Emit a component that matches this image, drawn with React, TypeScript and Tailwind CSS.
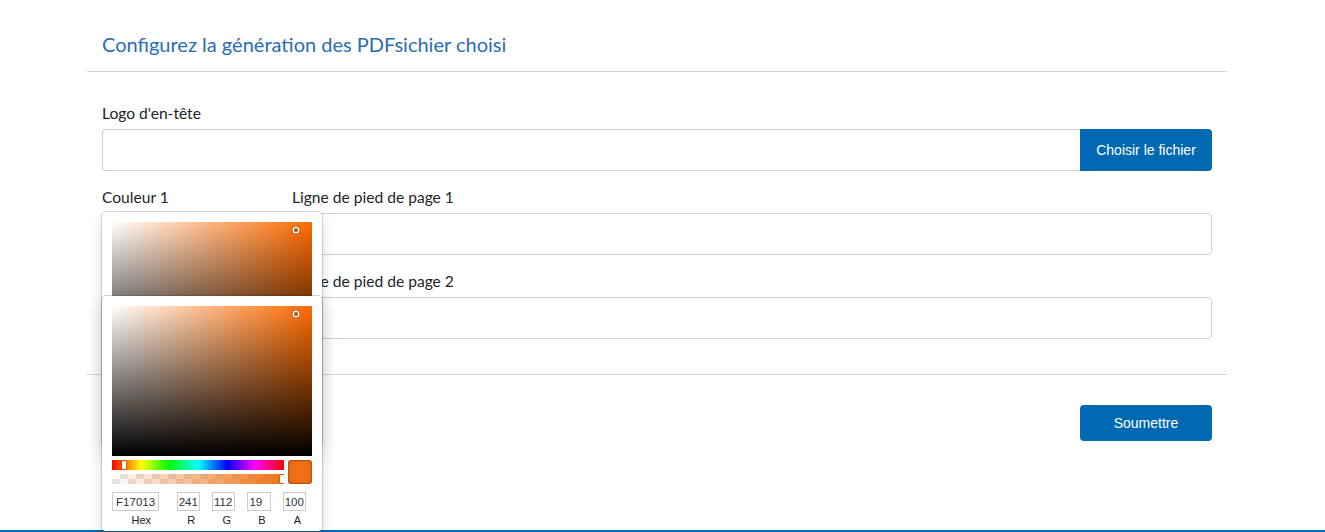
import React from "react";

// Sketch style colour picker, shown open over the colour field
function ColorField({ label, value, wide }: { label: string; value: string; wide?: boolean }) {
  return (
    <div className={wide ? "flex-[2]" : "flex-1 pl-[6px]"}>
      <input
        readOnly
        value={value}
        className="block w-[80%] px-[7%] pt-[4px] pb-[3px] text-[11.5px] leading-[12px] text-[#333] shadow-[inset_0_0_0_1px_#ccc] outline-none"
      />
      <span className="block pt-[3px] pb-[4px] text-center text-[11px] leading-[13px] capitalize text-[#222]">
        {label}
      </span>
    </div>
  );
}

function SketchPicker() {
  return (
    <div className="absolute -top-px left-0 z-10 w-[220px] rounded-[4px] bg-white px-[10px] pt-[10px] font-['Liberation_Sans',Arial,sans-serif] shadow-[0_0_0_1px_rgba(0,0,0,0.15),0_8px_16px_rgba(0,0,0,0.15)]">
      {/* Saturation */}
      <div className="relative h-[150px] w-full overflow-hidden bg-[#ff6b00]">
        <div className="absolute inset-0 bg-[linear-gradient(to_right,#fff,rgba(255,255,255,0))]" />
        <div className="absolute inset-0 bg-[linear-gradient(to_top,#000,rgba(0,0,0,0))]" />
        <div className="absolute left-[182px] top-[6px] h-[4px] w-[4px] rounded-full shadow-[0_0_0_1.5px_#fff,inset_0_0_1px_1px_rgba(0,0,0,0.3),0_0_1px_2px_rgba(0,0,0,0.4)]" />
      </div>

      {/* Sliders + swatch */}
      <div className="flex">
        <div className="flex-1 py-[4px]">
          <div className="relative h-[10px] overflow-hidden bg-[linear-gradient(to_right,#f00_0%,#ff0_17%,#0f0_33%,#0ff_50%,#00f_67%,#f0f_83%,#f00_100%)]">
            <div className="absolute left-[10px] top-[1px] h-[8px] w-[4px] rounded-[1px] bg-white shadow-[0_0_2px_rgba(0,0,0,0.6)]" />
          </div>
          <div className="relative mt-[4px] h-[10px] overflow-hidden bg-[repeating-conic-gradient(#e6e6e6_0_25%,#fff_0_50%)] bg-[length:16px_10px]">
            <div className="absolute inset-0 bg-[linear-gradient(to_right,rgba(241,112,19,0),rgb(241,112,19))]" />
            <div className="absolute right-0 top-[1px] h-[8px] w-[4px] rounded-[1px] bg-white shadow-[0_0_2px_rgba(0,0,0,0.6)]" />
          </div>
        </div>
        <div className="ml-[4px] mt-[4px] h-[24px] w-[24px] rounded-[3px] bg-[#f17013] shadow-[inset_0_0_0_1px_rgba(0,0,0,0.15),inset_0_0_4px_rgba(0,0,0,0.25)]" />
      </div>

      {/* Fields */}
      <div className="flex pt-[4px]">
        <ColorField label="Hex" value="F17013" wide />
        <ColorField label="R" value="241" />
        <ColorField label="G" value="112" />
        <ColorField label="B" value="19" />
        <ColorField label="A" value="100" />
      </div>
    </div>
  );
}

function Label({ children }: { children: React.ReactNode }) {
  return <label className="mb-[5px] block text-[15.6px] leading-[21px]">{children}</label>;
}

export default function App() {
  return (
    <div className="flex h-screen flex-col overflow-hidden bg-white font-['Lato',sans-serif] text-[#212529]">
      <div className="ml-[87px] w-[1140px]">
        {/* Header */}
        <div className="border-b border-[#d6d6d6] px-[15px] pt-[32px] pb-[15px]">
          <h1 className="text-[20px] leading-[24px] text-[#2a6db3]">
            Configurez la génération des PDFsichier choisi
          </h1>
        </div>

        {/* Form */}
        <form className="px-[15px] pt-[31px] pb-[35px]">
          <div className="mb-[16px]">
            <Label>Logo d'en-tête</Label>
            <div className="flex h-[42px]">
              <div className="flex-1 rounded-l-[4px] border border-r-0 border-[#cfcfcf]" />
              <button
                type="button"
                className="w-[132px] rounded-r-[4px] bg-[#0069b1] font-['Liberation_Sans',Arial,sans-serif] text-[14px] text-white"
              >
                Choisir le fichier
              </button>
            </div>
          </div>

          <div className="mb-[16px] flex gap-[30px]">
            <div className="w-[160px]">
              <Label>Couleur 1</Label>
              <div className="relative h-[42px]">
                <div className="h-full w-[77px] rounded-[4px] border border-[#cfcfcf]" />
                <SketchPicker />
              </div>
            </div>
            <div className="flex-1">
              <Label>Ligne de pied de page 1</Label>
              <div className="h-[42px] rounded-[4px] border border-[#cfcfcf]" />
            </div>
          </div>

          <div className="flex gap-[30px]">
            <div className="w-[160px]">
              <Label>Couleur 2</Label>
              <div className="relative h-[42px]">
                <div className="h-full w-[77px] rounded-[4px] border border-[#cfcfcf]" />
                <SketchPicker />
              </div>
            </div>
            <div className="flex-1">
              <Label>Ligne de pied de page 2</Label>
              <div className="h-[42px] rounded-[4px] border border-[#cfcfcf]" />
            </div>
          </div>
        </form>

        {/* Footer */}
        <div className="flex justify-end border-t border-[#d6d6d6] px-[15px] pt-[30px]">
          <button
            type="button"
            className="h-[36px] w-[132px] rounded-[4px] bg-[#0069b1] font-['Liberation_Sans',Arial,sans-serif] text-[14px] text-white"
          >
            Soumettre
          </button>
        </div>
      </div>

      <div className="mt-auto h-[2px] shrink-0 bg-[#0069b1]" />
    </div>
  );
}
